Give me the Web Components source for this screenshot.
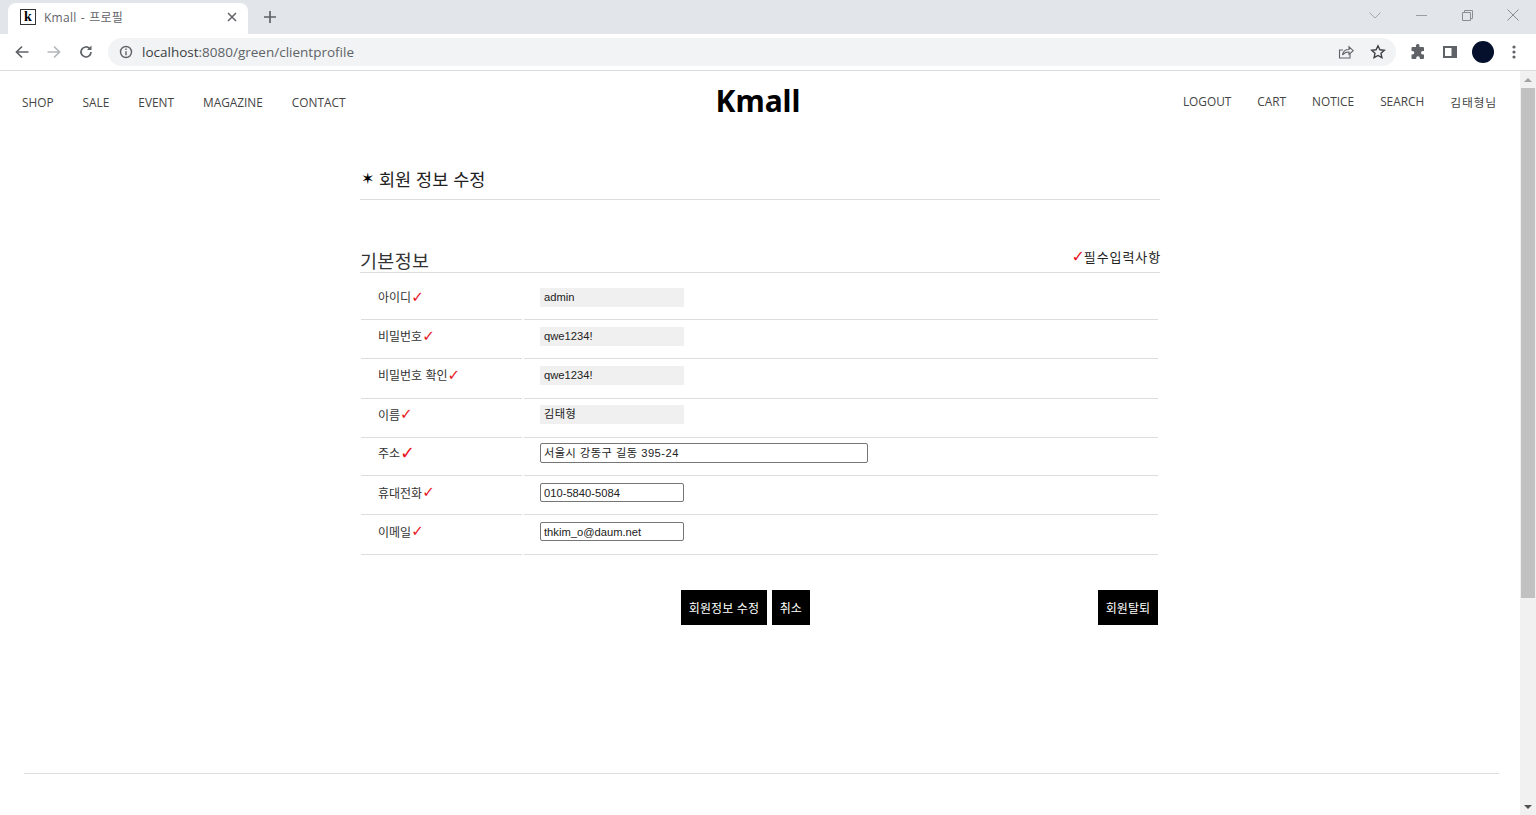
<!DOCTYPE html>
<html lang="ko">
<head>
<meta charset="utf-8">
<title>Kmall - 프로필</title>
<style>
    html, body { margin: 0; height: 100%; overflow: hidden; background: #fff; }
    body { display: flex; flex-direction: column; font-family: "Open Sans", "Noto Sans CJK KR", sans-serif; }
    .viewport { flex: 1; display: flex; min-height: 0; }
    .page { flex: 1; min-width: 0; display: flex; flex-direction: column; }
</style>
</head>
<body>
<browser-chrome url-host="localhost" url-path=":8080/green/clientprofile" tab-title="Kmall - 프로필"></browser-chrome>
<div class="viewport">
    <div class="page">
        <site-header>
            <a slot="left">SHOP</a>
            <a slot="left">SALE</a>
            <a slot="left">EVENT</a>
            <a slot="left">MAGAZINE</a>
            <a slot="left">CONTACT</a>
            <a slot="right">LOGOUT</a>
            <a slot="right">CART</a>
            <a slot="right">NOTICE</a>
            <a slot="right">SEARCH</a>
            <a slot="right" style="letter-spacing:.8px">김태형님</a>
        </site-header>
        <profile-form>
            <form-row label="아이디">admin</form-row>
            <form-row label="비밀번호">qwe1234!</form-row>
            <form-row label="비밀번호 확인">qwe1234!</form-row>
            <form-row label="이름" style="letter-spacing:.5px">김태형</form-row>
            <form-row label="주소" editable wide big-check style="letter-spacing:.5px;height:38.2px">서울시 강동구 길동 395-24</form-row>
            <form-row label="휴대전화" editable style="--row-pad:5px">010-5840-5084</form-row>
            <form-row label="이메일" editable style="height:40.2px">thkim_o@daum.net</form-row>
            <black-btn slot="actions">회원정보 수정</black-btn>
            <black-btn slot="actions">취소</black-btn>
            <black-btn slot="danger">회원탈퇴</black-btn>
        </profile-form>
        <site-footer></site-footer>
    </div>
    <page-scrollbar></page-scrollbar>
</div>

<script>
class BrowserChrome extends HTMLElement {
    constructor() {
        super();
        this.attachShadow({ mode: "open" });
    }

    connectedCallback() {
        const title = this.getAttribute("tab-title");
        const host = this.getAttribute("url-host");
        const path = this.getAttribute("url-path");
        this.shadowRoot.innerHTML = `
        <style>
            :host { display: block; flex: none; font-family: "Open Sans", "Noto Sans CJK KR", sans-serif; }
            svg { display: block; flex: none; }
            .strip { height: 34px; background: #e2e5e9; display: flex; align-items: flex-end; padding-left: 8px; }
            .tab {
                width: 240px; height: 31px; box-sizing: border-box; background: #fff;
                border-radius: 8px 8px 0 0; display: flex; align-items: center;
                padding: 0 11px 4px 12px; font-size: 12px; color: #5f6368;
            }
            .favicon {
                width: 14px; height: 14px; border: 1px solid #333; margin-right: 8px; flex: none;
                font: bold 14px/14px "Liberation Serif", serif; color: #000; text-align: center;
            }
            .title { flex: 1; letter-spacing: .25px; word-spacing: 1px; }
            .newtab { margin: 0 0 1px 15px; align-self: center; }
            .winctl { margin-left: auto; align-self: flex-start; display: flex; }
            .winctl div { width: 46px; height: 30px; display: flex; align-items: center; justify-content: center; }
            .bar {
                height: 37px; box-sizing: border-box; background: #fff; border-bottom: 1px solid #dadce0;
                display: flex; align-items: center; padding: 0 14px;
            }
            .nav { display: flex; gap: 16px; margin-right: 14px; }
            .omni {
                width: 1288px; height: 28px; box-sizing: border-box; background: #f1f3f4; border-radius: 14px;
                display: flex; align-items: center; padding: 0 10px 0 11px; font-size: 13.500px; color: #5f6368;
                margin-top: -1px;
            }
            .omni .host { color: #3c4043; }
            .url { margin-left: 9px; flex: 1; }
            .omni-icons { display: flex; gap: 16px; align-items: center; }
            .tools { display: flex; align-items: center; margin-left: 14px; gap: 16px; }
            .avatar { width: 22px; height: 22px; border-radius: 50%; background: #04102c; margin: 0 2px 0 -2px; }
        </style>
        <div class="strip">
            <div class="tab">
                <span class="favicon">k</span>
                <span class="title">${title}</span>
                <svg width="10" height="10" viewBox="0 0 10 10" fill="none" stroke="#5f6368" stroke-width="1.5"><path d="M1 1l8 8M9 1l-8 8"/></svg>
            </div>
            <svg class="newtab" width="14" height="14" viewBox="0 0 14 14" fill="none" stroke="#5f6368" stroke-width="1.7"><path d="M7 1v12M1 7h12"/></svg>
            <div class="winctl">
                <div><svg width="12" height="7" viewBox="0 0 12 7" fill="none" stroke="#a5a8ad"><path d="M.5.5L6 6l5.500-5.500"/></svg></div>
                <div><svg width="11" height="1" viewBox="0 0 11 1"><path d="M0 0h11v1H0z" fill="#9a9da2"/></svg></div>
                <div><svg width="11" height="11" viewBox="0 0 11 11" fill="none" stroke="#8a8d92"><path d="M.5 2.500h8v8h-8zM2.500 2.500v-2h8v8h-2"/></svg></div>
                <div><svg width="12" height="12" viewBox="0 0 12 12" fill="none" stroke="#8a8d92"><path d="M.5.5l11 11M11.500.5l-11 11"/></svg></div>
            </div>
        </div>
        <div class="bar">
            <div class="nav">
                <svg width="16" height="16" viewBox="0 0 16 16" fill="none" stroke="#5f6368" stroke-width="1.700"><path d="M14.500 8H2.500M8 2.500L2.500 8 8 13.500"/></svg>
                <svg width="16" height="16" viewBox="0 0 16 16" fill="none" stroke="#b4b7bb" stroke-width="1.700"><path d="M1.500 8h12M8 2.500L13.500 8 8 13.500"/></svg>
                <svg width="16" height="16" viewBox="0 0 16 16" fill="none" stroke="#5f6368" stroke-width="1.700"><path d="M13 8a5 5 0 1 1-1.500-3.600"/><path d="M13.500 1.500v4.500H9z" fill="#5f6368" stroke="none"/></svg>
            </div>
            <div class="omni">
                <svg width="14" height="14" viewBox="0 0 14 14" fill="none" stroke="#5f6368" stroke-width="1.400"><circle cx="7" cy="7" r="5.500"/><path d="M7 6.200v4M7 3.600v1.500"/></svg>
                <span class="url"><span class="host">${host}</span>${path}</span>
                <div class="omni-icons">
                    <svg width="16" height="16" viewBox="0 0 16 16" fill="none" stroke="#5f6368" stroke-width="1.100"><path d="M12 9v5H1.500V6H5"/><path d="M4.500 11c.5-3.500 3-5.500 6.500-5.500V2.800l4.200 3.900L11 10.300V8C8 8 6 9 4.500 11z"/></svg>
                    <svg width="16" height="16" viewBox="0 0 16 16" fill="none" stroke="#3c4043" stroke-width="1.400"><path d="M8 1.800l1.900 4 4.400.5-3.300 3 .9 4.400L8 11.500l-3.900 2.200.9-4.400-3.300-3 4.400-.5z"/></svg>
                </div>
            </div>
            <div class="tools">
                <svg width="16" height="16" viewBox="0 0 16 16" fill="#5f6368"><path d="M6 1.500a1.800 1.800 0 0 1 3.500 0V3H13a1 1 0 0 1 1 1v3h-1.200a1.800 1.800 0 0 0 0 3.600H14V14a1 1 0 0 1-1 1H9.800v-1a1.800 1.800 0 0 0-3.600 0v1H2.500a1 1 0 0 1-1-1v-3.400h1a1.800 1.800 0 0 0 0-3.600h-1V4a1 1 0 0 1 1-1H6z"/></svg>
                <svg width="16" height="16" viewBox="0 0 16 16"><path d="M1 2h14v12H1z" fill="#5f6368"/><path d="M3 4h6.500v8H3z" fill="#fff"/></svg>
                <div class="avatar"></div>
                <svg width="4" height="14" viewBox="0 0 4 14" fill="#5f6368"><circle cx="2" cy="2" r="1.600"/><circle cx="2" cy="7" r="1.600"/><circle cx="2" cy="12" r="1.600"/></svg>
            </div>
        </div>
        `;
    }
}

class SiteHeader extends HTMLElement {
    constructor() {
        super();
        this.attachShadow({ mode: "open" });
        this.shadowRoot.innerHTML = `
        <style>
            :host {
                display: grid; grid-template-columns: 1fr auto 1fr; align-items: center;
                height: 60px; padding: 0 23px 0 22px; flex: none;
                font-family: "Open Sans", "Noto Sans CJK KR", sans-serif;
            }
            .left, .right { display: flex; font-size: 11.850px; color: #444; padding-top: 1px; }
            .left { gap: 29px; }
            .right { gap: 26px; justify-content: flex-end; }
            .logo { font: bold 30px/1 "Noto Sans", sans-serif; color: #000; margin-left: -3px; }
            ::slotted(a) { cursor: pointer; }
        </style>
        <div class="left"><slot name="left"></slot></div>
        <div class="logo">Kmall</div>
        <div class="right"><slot name="right"></slot></div>
        `;
    }
}

class ProfileForm extends HTMLElement {
    constructor() {
        super();
        this.attachShadow({ mode: "open" });
        this.shadowRoot.innerHTML = `
        <style>
            :host {
                display: block; width: 800px; margin: 0 auto; flex: none; color: #222;
                font-family: "Liberation Sans", "Noto Sans CJK KR", sans-serif;
            }
            h1 {
                margin: 33px 0 0; height: 36px; box-sizing: border-box; border-bottom: 1px solid #ddd;
                font: 400 17.500px/30px "Noto Sans CJK KR", sans-serif; padding-left: 1px;
                display: flex; align-items: flex-start;
            }
            .star { font-family: "DejaVu Sans", sans-serif; font-size: 16px; color: #000; width: 18px; flex: none; }
            .sec {
                margin-top: 46px; height: 27px; box-sizing: border-box; border-bottom: 1px solid #ddd;
                display: flex; justify-content: space-between;
            }
            h2 { margin: 0; font: 400 18.500px/28px "Noto Sans CJK KR", sans-serif; color: #333; letter-spacing: .3px; }
            .req { font: 400 13px/22px "Noto Sans CJK KR", sans-serif; color: #222; letter-spacing: .9px; margin-right: -1px; }
            .chk { font: bold 16px/1 "DejaVu Sans", sans-serif; color: #e8141e; letter-spacing: 0; margin-right: -1px; }
            .rows { padding: 8px 2px 0 1px; }
            .btns {
                display: flex; gap: 5px; margin-top: 35px; padding: 0 2px 0 321px;
            }
            .danger { margin-left: auto; }
        </style>
        <h1><span class="star">✶</span><span>회원 정보 수정</span></h1>
        <div class="sec">
            <h2>기본정보</h2>
            <span class="req"><span class="chk">✓</span>필수입력사항</span>
        </div>
        <div class="rows"><slot></slot></div>
        <div class="btns">
            <slot name="actions"></slot>
            <span class="danger"><slot name="danger"></slot></span>
        </div>
        `;
    }
}

class FormRow extends HTMLElement {
    constructor() {
        super();
        this.attachShadow({ mode: "open" });
    }

    connectedCallback() {
        const label = this.getAttribute("label");
        this.shadowRoot.innerHTML = `
        <style>
            :host {
                display: grid; grid-template-columns: 161px 1fr; column-gap: 2px;
                height: 39.200px; box-sizing: border-box;
                font-family: "Liberation Sans", "Noto Sans CJK KR", sans-serif;
            }
            .cell {
                border-bottom: 1px solid #ddd; display: flex; align-items: center; box-sizing: border-box;
                padding-bottom: var(--row-pad, 6px);
            }
            .lab { padding-left: 17px; font: 400 12px/1 "Noto Sans CJK KR", sans-serif; color: #333; letter-spacing: 0; }
            .chk { font: bold 15px/1 "DejaVu Sans", sans-serif; color: #e8141e; }
            :host([big-check]) .chk { font-size: 18px; }
            .val { padding-left: 16px; }
            .box {
                width: 144px; height: 19px; box-sizing: border-box; background: #f0f0f0;
                padding: 0 4px; font-size: 11.200px; line-height: 19px; color: #222; white-space: nowrap;
            }
            :host([editable]) .box {
                background: #fff; border: 1px solid #767676; border-radius: 2px; padding: 0 3px; line-height: 18px;
            }
            :host([wide]) .box { width: 328px; height: 20px; }
        </style>
        <div class="cell lab">${label}<span class="chk">✓</span></div>
        <div class="cell val"><div class="box"><slot></slot></div></div>
        `;
    }
}

class BlackBtn extends HTMLElement {
    constructor() {
        super();
        this.attachShadow({ mode: "open" });
        this.shadowRoot.innerHTML = `
        <style>
            :host {
                display: inline-flex; align-items: center; height: 35px; box-sizing: border-box;
                padding: 0 7.800px; background: #000; color: #fff; cursor: pointer;
                font: 400 12px/1 "Noto Sans CJK KR", sans-serif; letter-spacing: .1px;
            }
        </style>
        <slot></slot>
        `;
    }
}

class SiteFooter extends HTMLElement {
    constructor() {
        super();
        this.attachShadow({ mode: "open" });
        this.shadowRoot.innerHTML = `
        <style>
            :host { display: block; margin: 148px 21px 0 24px; border-top: 1px solid #ddd; flex: none; }
        </style>
        `;
    }
}

class PageScrollbar extends HTMLElement {
    constructor() {
        super();
        this.attachShadow({ mode: "open" });
        this.shadowRoot.innerHTML = `
        <style>
            :host { display: flex; flex-direction: column; width: 16px; flex: none; background: #f1f1f1; align-items: center; }
            .arrow { height: 17px; flex: none; display: flex; align-items: center; justify-content: center; }
            .thumb { width: 14px; height: 510px; background: #c1c1c1; flex: none; }
            .end { margin-top: auto; }
        </style>
        <div class="arrow"><svg width="8" height="4" viewBox="0 0 8 4"><path d="M4 0l4 4H0z" fill="#a3a3a3"/></svg></div>
        <div class="thumb"></div>
        <div class="arrow end"><svg width="8" height="4" viewBox="0 0 8 4"><path d="M4 4L0 0h8z" fill="#505050"/></svg></div>
        `;
    }
}

customElements.define("browser-chrome", BrowserChrome);
customElements.define("site-header", SiteHeader);
customElements.define("profile-form", ProfileForm);
customElements.define("form-row", FormRow);
customElements.define("black-btn", BlackBtn);
customElements.define("site-footer", SiteFooter);
customElements.define("page-scrollbar", PageScrollbar);
</script>
</body>
</html>
